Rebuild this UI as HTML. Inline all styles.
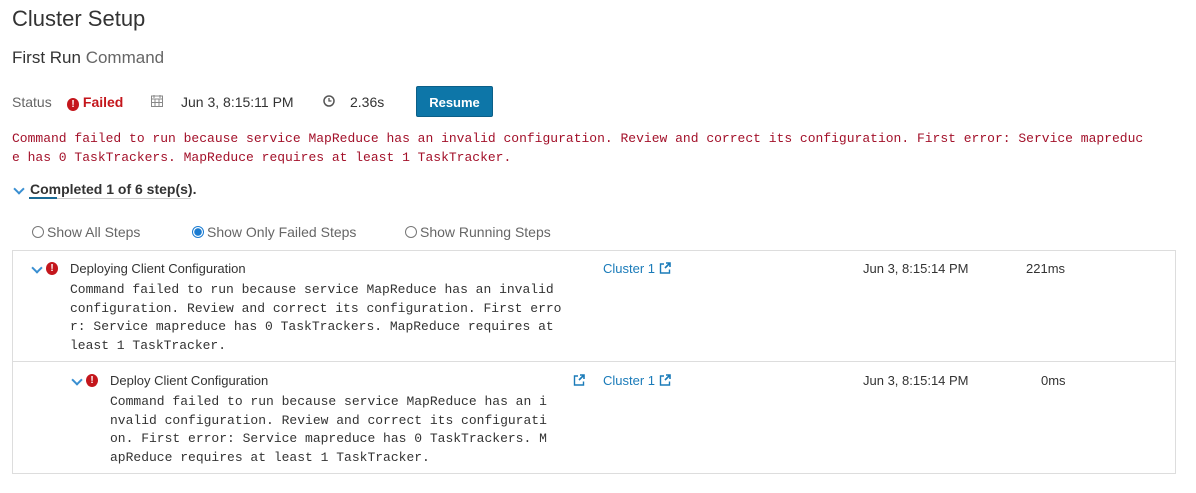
<!DOCTYPE html>
<html><head><style>
body{margin:0;width:1196px;height:493px;background:#fff;font-family:"Liberation Sans",sans-serif;color:#333;position:relative;overflow:hidden}
.a{position:absolute;white-space:nowrap}
.mono{font-family:"Liberation Mono",monospace;font-size:13px;line-height:18.5px;white-space:pre}
.blue{color:#1a7bb9}
.chev{display:inline-block;width:6px;height:6px;border-right:2.5px solid #3a8fd1;border-bottom:2.5px solid #3a8fd1;transform:rotate(45deg)}
.err{display:inline-block;width:12px;height:13px;border-radius:50%;background:#c4161c;color:#fff;font-size:10px;font-weight:bold;text-align:center;line-height:13px}
.radio{display:inline-block;width:12px;height:12px;border:1px solid #777;border-radius:50%;vertical-align:-1px;margin-right:3px;box-sizing:border-box}
</style></head><body>
<svg width="0" height="0" style="position:absolute"><defs><symbol id="ext" viewBox="0 0 12 12"><path d="M5 2H1.5v9h9V7.5" fill="none" stroke="#1a7bb9" stroke-width="1.4"/><path d="M6 6L11 1M7 1h4v4" fill="none" stroke="#1a7bb9" stroke-width="1.6"/></symbol></defs></svg>
<div class="a" style="left:12px;top:6px;font-size:22px;color:#333">Cluster Setup</div>
<div class="a" style="left:12px;top:48px;font-size:17px;color:#333">First Run <span style="color:#666">Command</span></div>
<div class="a" style="left:12px;top:94px;font-size:14px;color:#666">Status</div>
<div class="a" style="left:67px;top:94px;font-size:14px;color:#c4161c;font-weight:bold"><span class="err" style="vertical-align:0px">!</span> Failed</div>
<svg class="a" style="left:151px;top:94px" width="12" height="13" viewBox="0 0 12 13"><rect x="0.5" y="2" width="11" height="10.5" fill="none" stroke="#888"/><path d="M0 5h12M3 1v3M9 1v3M4 5v8M8 5v8M0 8.5h12" stroke="#888"/></svg>
<div class="a" style="left:181px;top:94px;font-size:14px">Jun 3, 8:15:11 PM</div>
<svg class="a" style="left:323px;top:95px" width="12" height="12"><circle cx="6" cy="6" r="5" fill="none" stroke="#555" stroke-width="1.5"/><path d="M6 3v3h2.5" stroke="#555" fill="none" stroke-width="1.3"/></svg>
<div class="a" style="left:350px;top:94px;font-size:14px">2.36s</div>
<div class="a" style="left:416px;top:86px;width:77px;height:31px;background:#0d76a8;border:1px solid #0b5f88;border-radius:2px;color:#fff;font-weight:bold;font-size:13px;text-align:center;line-height:31px;box-sizing:border-box">Resume</div>
<div class="a mono" style="left:12px;top:130px;color:#a3112a">Command failed to run because service MapReduce has an invalid configuration. Review and correct its configuration. First error: Service mapreduc
e has 0 TaskTrackers. MapReduce requires at least 1 TaskTracker.</div>
<span class="a chev" style="left:15px;top:185px"></span>
<div class="a" style="left:30px;top:181px;font-size:14px;font-weight:bold;color:#333">Completed 1 of 6 step(s).</div>
<div class="a" style="left:29px;top:198px;width:162px;height:1px;background:#ccc"></div>
<div class="a" style="left:29px;top:197px;width:28px;height:2px;background:#1a6a95"></div>
<div class="a" style="left:32px;top:224px;font-size:14px;color:#666"><span class="radio"></span>Show All Steps</div>
<div class="a" style="left:192px;top:224px;font-size:14px;color:#666"><span class="radio" style="border-color:#1a7bd1;background:radial-gradient(circle,#1a7bd1 3.5px,#fff 4px)"></span>Show Only Failed Steps</div>
<div class="a" style="left:405px;top:224px;font-size:14px;color:#666"><span class="radio"></span>Show Running Steps</div>
<div class="a" style="left:12px;top:250px;width:1164px;height:224px;border:1px solid #ddd;box-sizing:border-box"></div>
<div class="a" style="left:13px;top:361px;width:1162px;height:1px;background:#ddd"></div>
<span class="a chev" style="left:33px;top:264px"></span><span class="a err" style="left:46px;top:262px">!</span>
<div class="a" style="left:70px;top:261px;font-size:13px">Deploying Client Configuration</div>
<div class="a mono" style="left:70px;top:281px;color:#333">Command failed to run because service MapReduce has an invalid
configuration. Review and correct its configuration. First erro
r: Service mapreduce has 0 TaskTrackers. MapReduce requires at
least 1 TaskTracker.</div>
<div class="a blue" style="left:603px;top:261px;font-size:13px">Cluster 1</div>
<svg class="a" style="left:659px;top:262px" width="12" height="12"><use href="#ext"/></svg>
<div class="a" style="left:863px;top:261px;font-size:13px">Jun 3, 8:15:14 PM</div>
<div class="a" style="left:1026px;top:261px;font-size:13px">221ms</div>
<span class="a chev" style="left:73px;top:376px"></span><span class="a err" style="left:86px;top:374px">!</span>
<div class="a" style="left:110px;top:373px;font-size:13px">Deploy Client Configuration</div>
<div class="a mono" style="left:110px;top:393px;color:#333">Command failed to run because service MapReduce has an i
nvalid configuration. Review and correct its configurati
on. First error: Service mapreduce has 0 TaskTrackers. M
apReduce requires at least 1 TaskTracker.</div>
<svg class="a" style="left:573px;top:374px" width="12" height="12"><use href="#ext"/></svg>
<div class="a blue" style="left:603px;top:373px;font-size:13px">Cluster 1</div>
<svg class="a" style="left:659px;top:374px" width="12" height="12"><use href="#ext"/></svg>
<div class="a" style="left:863px;top:373px;font-size:13px">Jun 3, 8:15:14 PM</div>
<div class="a" style="left:1041px;top:373px;font-size:13px">0ms</div>
</body></html>
